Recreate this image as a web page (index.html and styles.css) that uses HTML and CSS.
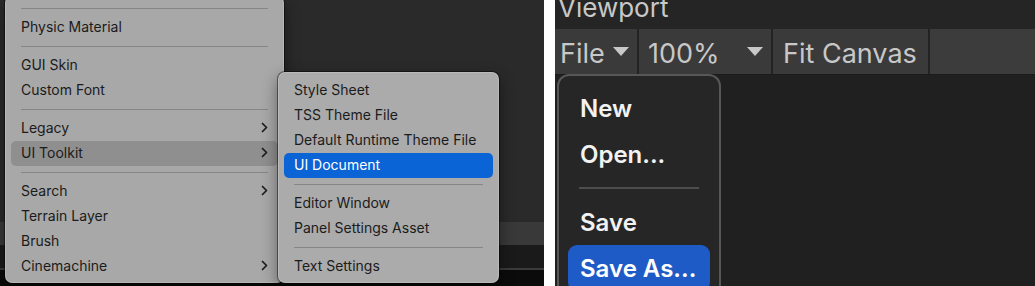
FILE: index.html
```html
<!DOCTYPE html>
<html lang="en">
<head>
  <meta charset="UTF-8">
  <meta name="viewport" content="width=device-width, initial-scale=1.0">
  <title>Create Menu / Viewport</title>
  <link rel="stylesheet" href="styles.css">
</head>
<body>
  <div class="screen">
    <!-- Left shot: Assets > Create context menu -->
    <section class="editor">
      <div class="bg-top"></div>
      <div class="bg-band"></div>
      <div class="bg-dark"></div>
      <div class="bg-line"></div>
      <div class="bg-bottom"></div>

      <ul class="menu menu-main">
        <li class="sep"></li>
        <li class="item">Physic Material</li>
        <li class="sep"></li>
        <li class="item">GUI Skin</li>
        <li class="item">Custom Font</li>
        <li class="sep"></li>
        <li class="item">Legacy
          <svg class="chevron" width="7" height="11" viewBox="0 0 7 11"><path d="M1.5 1.5 L5.5 5.5 L1.5 9.5" /></svg>
        </li>
        <li class="item hover">UI Toolkit
          <svg class="chevron" width="7" height="11" viewBox="0 0 7 11"><path d="M1.5 1.5 L5.5 5.5 L1.5 9.5" /></svg>
        </li>
        <li class="sep"></li>
        <li class="item">Search
          <svg class="chevron" width="7" height="11" viewBox="0 0 7 11"><path d="M1.5 1.5 L5.5 5.5 L1.5 9.5" /></svg>
        </li>
        <li class="item">Terrain Layer</li>
        <li class="item">Brush</li>
        <li class="item">Cinemachine
          <svg class="chevron" width="7" height="11" viewBox="0 0 7 11"><path d="M1.5 1.5 L5.5 5.5 L1.5 9.5" /></svg>
        </li>
      </ul>

      <ul class="menu menu-sub">
        <li class="item">Style Sheet</li>
        <li class="item">TSS Theme File</li>
        <li class="item">Default Runtime Theme File</li>
        <li class="item selected">UI Document</li>
        <li class="sep"></li>
        <li class="item">Editor Window</li>
        <li class="item">Panel Settings Asset</li>
        <li class="sep"></li>
        <li class="item">Text Settings</li>
      </ul>
    </section>

    <div class="gap"></div>

    <!-- Right shot: UI Builder viewport -->
    <section class="viewport">
      <div class="viewport-title">Viewport</div>
      <div class="toolbar">
        <div class="tool tool-file">File
          <svg class="caret" width="16" height="9" viewBox="0 0 16 9"><polygon points="0,0 16,0 8,9" /></svg>
        </div>
        <div class="tool tool-zoom">100%
          <svg class="caret" width="16" height="9" viewBox="0 0 16 9"><polygon points="0,0 16,0 8,9" /></svg>
        </div>
        <div class="tool tool-fit">Fit Canvas</div>
        <div class="tool tool-fill"></div>
      </div>
      <div class="canvas"></div>

      <ul class="dropdown">
        <li class="drop-item">New</li>
        <li class="drop-item">Open...</li>
        <li class="drop-sep"></li>
        <li class="drop-item">Save</li>
        <li class="drop-item selected">Save As...</li>
      </ul>
    </section>
  </div>
</body>
</html>
```

FILE: styles.css
```css
/* General */
body {
  margin: 0;
  background-color: #ffffff;
  font-family: Inter, "Noto Sans", sans-serif;
}

ul {
  list-style: none;
  margin: 0;
  padding: 0;
}

.screen {
  display: flex;
  width: 1035px;
  height: 286px;
  overflow: hidden;
}

/* Left shot */
.editor {
  position: relative;
  width: 544px;
  height: 286px;
  overflow: hidden;
  display: flex;
  flex-direction: column;
}

.bg-top {
  height: 222px;
  background-color: #2a2a2a;
}

.bg-band {
  height: 23px;
  background-color: #393939;
}

.bg-dark {
  height: 23px;
  background-color: #1a1a1a;
}

.bg-line {
  height: 2px;
  background-color: #3b3b3b;
}

.bg-bottom {
  flex: 1;
  background-color: #0b0b0b;
}

.menu {
  position: absolute;
  padding: 5px;
  background-color: #a8a8a8;
  border: 1px solid rgba(255, 255, 255, 0.18);
  border-radius: 7px;
  box-shadow: 0 0 0 1px rgba(0, 0, 0, 0.45), 0 6px 16px rgba(0, 0, 0, 0.45);
  box-sizing: border-box;
  color: #1b1b1b;
  font-size: 14px;
}

.menu-main {
  left: 5px;
  top: -4px;
  width: 279px;
  height: 287px;
}

.menu-sub {
  left: 278px;
  top: 72px;
  width: 221px;
  height: 211px;
  background-color: #ababab;
}

.menu .item {
  display: flex;
  align-items: center;
  justify-content: space-between;
  height: 25px;
  padding: 0 10px 2px;
  border-radius: 5px;
  box-sizing: border-box;
  white-space: nowrap;
}

.menu .item.hover {
  background-color: #8f8f8f;
}

.menu .item.selected {
  background-color: #0a64d6;
  color: #ffffff;
}

.menu .sep {
  display: flex;
  align-items: center;
  height: 13px;
}

.menu .sep::before {
  content: "";
  flex: 1;
  height: 1px;
  margin: 0 10px;
  background-color: #868686;
}

.chevron path {
  fill: none;
  stroke: #1b1b1b;
  stroke-width: 1.7;
  stroke-linecap: round;
  stroke-linejoin: round;
}

.gap {
  width: 11px;
  background-color: #ffffff;
}

/* Right shot */
.viewport {
  position: relative;
  width: 480px;
  height: 286px;
  overflow: hidden;
  display: flex;
  flex-direction: column;
  background-color: #202020;
  color: #c8c8c8;
}

.viewport-title {
  height: 29px;
  padding-left: 3px;
  background-color: #252525;
  font-size: 26px;
  line-height: 16px;
}

.toolbar {
  display: flex;
  gap: 2px;
  height: 46px;
  background-color: #232323;
  border-bottom: 1px solid #1b1b1b;
  box-sizing: border-box;
}

.tool {
  display: flex;
  align-items: center;
  justify-content: space-between;
  padding-top: 3px;
  background-color: #3a3a3a;
  font-size: 27px;
  white-space: nowrap;
}

.tool-file {
  width: 82px;
  padding: 3px 8px 0 5px;
  box-sizing: border-box;
}

.tool-zoom {
  width: 132px;
  padding: 3px 8px 0 9px;
  box-sizing: border-box;
}

.tool-fit {
  width: 155px;
  padding: 3px 10px 0;
  box-sizing: border-box;
}

.tool-fill {
  flex: 1;
  background-color: #3c3c3c;
}

.caret {
  margin-bottom: 3px;
}

.caret polygon {
  fill: #c8c8c8;
}

.canvas {
  flex: 1;
}

.dropdown {
  position: absolute;
  left: 2px;
  top: 74px;
  width: 164px;
  height: 240px;
  padding: 9px 9px;
  background-color: #262626;
  border: 2px solid #575757;
  border-radius: 12px;
  box-sizing: border-box;
}

.drop-item {
  display: flex;
  align-items: center;
  height: 46px;
  padding: 0 12px;
  border-radius: 9px;
  color: #f2f2f2;
  font-size: 24px;
  font-weight: 600;
  white-space: nowrap;
}

.drop-item.selected {
  background-color: #1f5bc6;
  color: #ffffff;
}

.drop-sep {
  display: flex;
  align-items: center;
  height: 22px;
}

.drop-sep::before {
  content: "";
  flex: 1;
  height: 2px;
  margin: 0 11px 0 11px;
  background-color: #4d4d4d;
}
```
